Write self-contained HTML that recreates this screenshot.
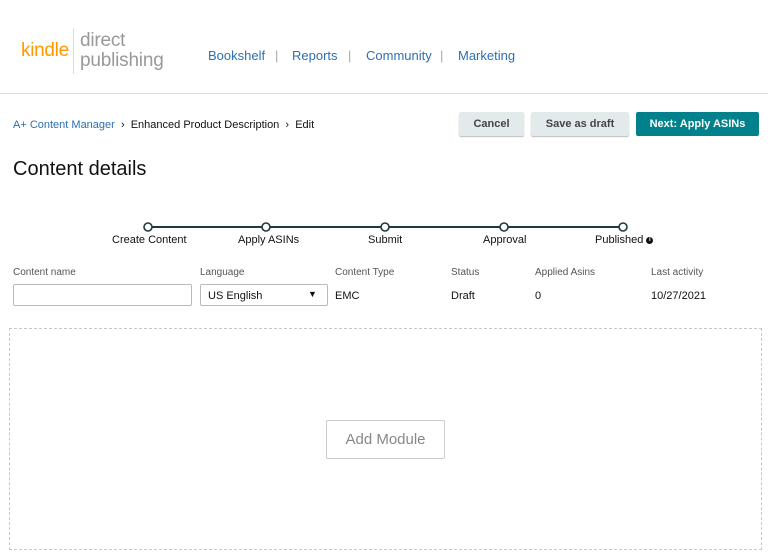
<!DOCTYPE html>
<html><head><style>
*{box-sizing:border-box;margin:0;padding:0}
body{width:768px;height:559px;background:#fff;font-family:"Liberation Sans",sans-serif;position:relative;overflow:hidden;color:#111}
.a{position:absolute;white-space:nowrap}
.nav{color:#2d6fb3;font-size:13px}
.sep{color:#aaa;font-size:13px}
.lbl{font-size:10px;color:#555}
.val{font-size:11px;color:#111}
.btn{position:absolute;top:112px;height:24px;font-size:11px;font-weight:bold;text-align:center;line-height:24px;border-radius:2px}
</style></head><body>
<div class="a" style="left:21px;top:40px;font-size:19px;color:#f90;letter-spacing:-0.3px">kindle</div>
<div class="a" style="left:73px;top:28px;width:1px;height:46px;background:#ddd"></div>
<div class="a" style="left:80px;top:31px;font-size:19px;color:#999;line-height:20px;letter-spacing:-0.2px">direct<br>publishing</div>
<div class="a nav" style="left:208px;top:48px">Bookshelf</div>
<div class="a sep" style="left:275px;top:48px">|</div>
<div class="a nav" style="left:292px;top:48px">Reports</div>
<div class="a sep" style="left:348px;top:48px">|</div>
<div class="a nav" style="left:366px;top:48px">Community</div>
<div class="a sep" style="left:440px;top:48px">|</div>
<div class="a nav" style="left:458px;top:48px">Marketing</div>
<div class="a" style="left:0;top:93px;width:768px;height:1px;background:#ddd"></div>
<div class="a" style="left:13px;top:119px;font-size:11px"><span style="color:#2d6fb3">A+ Content Manager</span> &nbsp;›&nbsp; Enhanced Product Description &nbsp;›&nbsp; Edit</div>
<div class="btn" style="left:459px;width:65px;background:#e3eaec;color:#444;box-shadow:0 1px 1px #bbb">Cancel</div>
<div class="btn" style="left:531px;width:98px;background:#e3eaec;color:#444;box-shadow:0 1px 1px #bbb">Save as draft</div>
<div class="btn" style="left:636px;width:123px;background:#00818c;color:#fff">Next: Apply ASINs</div>
<div class="a" style="left:13px;top:158px;font-size:20px;color:#111">Content details</div>
<div class="a" style="left:148px;top:226px;width:475px;height:2px;background:#1f3a3d"></div>
<svg class="a" style="left:0;top:220px" width="768" height="14">
<g fill="#fff" stroke="#1f3a3d" stroke-width="1.6">
<circle cx="148" cy="7" r="4"/><circle cx="266" cy="7" r="4"/><circle cx="385" cy="7" r="4"/><circle cx="504" cy="7" r="4"/><circle cx="623" cy="7" r="4"/></g></svg>
<div class="a val" style="left:112px;top:234px">Create Content</div>
<div class="a val" style="left:238px;top:234px">Apply ASINs</div>
<div class="a val" style="left:368px;top:234px">Submit</div>
<div class="a val" style="left:483px;top:234px">Approval</div>
<div class="a val" style="left:595px;top:234px">Published <span style="display:inline-block;width:7px;height:7px;border-radius:50%;background:#111;vertical-align:middle;color:#fff;font-size:6px;line-height:7px;text-align:center;font-weight:bold">i</span></div>
<div class="a lbl" style="left:13px;top:267px">Content name</div>
<div class="a lbl" style="left:200px;top:267px">Language</div>
<div class="a lbl" style="left:335px;top:267px">Content Type</div>
<div class="a lbl" style="left:451px;top:267px">Status</div>
<div class="a lbl" style="left:535px;top:267px">Applied Asins</div>
<div class="a lbl" style="left:651px;top:267px">Last activity</div>
<div class="a" style="left:13px;top:284px;width:179px;height:22px;border:1px solid #bbb;border-radius:2px"></div>
<div class="a" style="left:200px;top:284px;width:128px;height:22px;border:1px solid #bbb;border-radius:2px"></div>
<div class="a val" style="left:208px;top:290px">US English</div>
<div class="a" style="left:308px;top:289px;font-size:9px">▼</div>
<div class="a val" style="left:335px;top:290px">EMC</div>
<div class="a val" style="left:451px;top:290px">Draft</div>
<div class="a val" style="left:535px;top:290px">0</div>
<div class="a val" style="left:651px;top:290px">10/27/2021</div>
<div class="a" style="left:9px;top:328px;width:753px;height:222px;border:1px dashed #c8c8c8"></div>
<div class="a" style="left:326px;top:420px;width:119px;height:39px;border:1px solid #ccc;border-radius:2px;color:#888;font-size:15px;text-align:center;line-height:37px">Add Module</div>
</body></html>
